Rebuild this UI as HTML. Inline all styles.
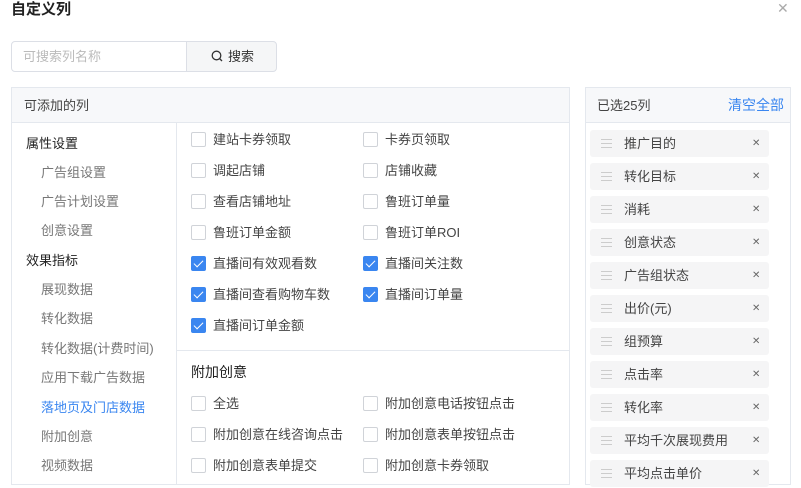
<!DOCTYPE html>
<html><head><meta charset="utf-8"><style>
*{box-sizing:border-box;margin:0;padding:0}
body{width:801px;height:488px;overflow:hidden;background:#fff;font-family:"Liberation Sans","Noto Sans CJK SC",sans-serif;color:#444;font-size:13px;line-height:15px;position:relative}
.a{position:absolute;white-space:nowrap}
.title{left:11px;top:1px;font-size:15px;line-height:17px;font-weight:bold;color:#222}
.close{left:777px;top:1px;font-size:14px;color:#aaa}
.inp{left:11px;top:41px;width:176px;height:31px;border:1px solid #dcdfe6;border-radius:4px 0 0 4px;color:#bbb;padding:7px 11px}
.btn{left:186px;top:41px;width:91px;height:31px;border:1px solid #dcdfe6;border-radius:0 4px 4px 0;background:#f5f6f7;padding:7px 0 0 24px;color:#333}
.panel{border:1px solid #e4e8ee}
.hdr{background:#f7f8fa;border-bottom:1px solid #e4e8ee}
.cb{width:15px;height:15px;border:1px solid #d0d3d8;border-radius:2px;background:#fff}
.on{background:#3a86f0;border-color:#3a86f0}
.on::after{content:"";position:absolute;left:4px;top:1px;width:4px;height:8px;border:solid #fff;border-width:0 1.5px 1.5px 0;transform:rotate(45deg)}
.it{left:590px;width:179px;height:27px;background:#f5f5f6;border-radius:3px}
.it .h{position:absolute;left:11px;top:9px;width:11px;height:9px;border-top:1px solid #ccc;border-bottom:1px solid #ccc}
.it .h::after{content:"";position:absolute;left:0;top:3px;width:11px;border-top:1px solid #ccc}
.it .t{position:absolute;left:34px;top:6px}
.it .x{position:absolute;left:162px;top:6px;font-size:10px;color:#666}
</style></head><body>
<div class="a title">自定义列</div>
<div class="a close">✕</div>
<div class="a inp">可搜索列名称</div>
<div class="a btn"><svg width="12" height="12" viewBox="0 0 12 12" style="vertical-align:-1px;margin-right:5px"><circle cx="5.5" cy="5.5" r="4.3" fill="none" stroke="#333" stroke-width="1.3"/><path d="M8.5 8.5L11 11" stroke="#333" stroke-width="1.3"/></svg>搜索</div>

<div class="a panel" style="left:11px;top:87px;width:559px;height:398px"></div>
<div class="a hdr" style="left:12px;top:88px;width:557px;height:35px;padding:10px 0 0 12px;">可添加的列</div>
<div class="a" style="left:176px;top:123px;height:361px;border-left:1px solid #e4e8ee"></div>
<div class="a" style="left:177px;top:350px;width:392px;border-top:1px solid #e4e8ee"></div>

<div class="a" style="left:26px;top:136px;color:#222">属性设置</div>
<div class="a" style="left:41px;top:165px;color:#777">广告组设置</div>
<div class="a" style="left:41px;top:194px;color:#777">广告计划设置</div>
<div class="a" style="left:41px;top:223px;color:#777">创意设置</div>
<div class="a" style="left:26px;top:253px;color:#222">效果指标</div>
<div class="a" style="left:41px;top:282px;color:#777">展现数据</div>
<div class="a" style="left:41px;top:311px;color:#777">转化数据</div>
<div class="a" style="left:41px;top:341px;color:#777">转化数据(计费时间)</div>
<div class="a" style="left:41px;top:370px;color:#777">应用下载广告数据</div>
<div class="a" style="left:41px;top:400px;color:#3a86f0">落地页及门店数据</div>
<div class="a" style="left:41px;top:429px;color:#777">附加创意</div>
<div class="a" style="left:41px;top:458px;color:#777">视频数据</div>

<div class="a cb" style="left:191px;top:132px"></div><div class="a" style="left:213px;top:132px">建站卡券领取</div>
<div class="a cb" style="left:363px;top:132px"></div><div class="a" style="left:385px;top:132px">卡券页领取</div>
<div class="a cb" style="left:191px;top:163px"></div><div class="a" style="left:213px;top:163px">调起店铺</div>
<div class="a cb" style="left:363px;top:163px"></div><div class="a" style="left:385px;top:163px">店铺收藏</div>
<div class="a cb" style="left:191px;top:194px"></div><div class="a" style="left:213px;top:194px">查看店铺地址</div>
<div class="a cb" style="left:363px;top:194px"></div><div class="a" style="left:385px;top:194px">鲁班订单量</div>
<div class="a cb" style="left:191px;top:225px"></div><div class="a" style="left:213px;top:225px">鲁班订单金额</div>
<div class="a cb" style="left:363px;top:225px"></div><div class="a" style="left:385px;top:225px">鲁班订单ROI</div>
<div class="a cb on" style="left:191px;top:256px"></div><div class="a" style="left:213px;top:256px">直播间有效观看数</div>
<div class="a cb on" style="left:363px;top:256px"></div><div class="a" style="left:385px;top:256px">直播间关注数</div>
<div class="a cb on" style="left:191px;top:287px"></div><div class="a" style="left:213px;top:287px">直播间查看购物车数</div>
<div class="a cb on" style="left:363px;top:287px"></div><div class="a" style="left:385px;top:287px">直播间订单量</div>
<div class="a cb on" style="left:191px;top:318px"></div><div class="a" style="left:213px;top:318px">直播间订单金额</div>

<div class="a" style="left:191px;top:364px;font-size:14px;line-height:16px;color:#222">附加创意</div>
<div class="a cb" style="left:191px;top:396px"></div><div class="a" style="left:213px;top:396px">全选</div>
<div class="a cb" style="left:363px;top:396px"></div><div class="a" style="left:385px;top:396px">附加创意电话按钮点击</div>
<div class="a cb" style="left:191px;top:427px"></div><div class="a" style="left:213px;top:427px">附加创意在线咨询点击</div>
<div class="a cb" style="left:363px;top:427px"></div><div class="a" style="left:385px;top:427px">附加创意表单按钮点击</div>
<div class="a cb" style="left:191px;top:458px"></div><div class="a" style="left:213px;top:458px">附加创意表单提交</div>
<div class="a cb" style="left:363px;top:458px"></div><div class="a" style="left:385px;top:458px">附加创意卡券领取</div>

<div class="a panel" style="left:585px;top:87px;width:206px;height:398px"></div>
<div class="a hdr" style="left:586px;top:88px;width:204px;height:35px;padding:10px 0 0 11px;">已选25列<span style="position:absolute;left:142px;top:9px;color:#3a86f0;font-size:14px;line-height:16px">清空全部</span></div>

<div class="a it" style="top:130px"><i class="h"></i><span class="t">推广目的</span><span class="x">✕</span></div>
<div class="a it" style="top:163px"><i class="h"></i><span class="t">转化目标</span><span class="x">✕</span></div>
<div class="a it" style="top:196px"><i class="h"></i><span class="t">消耗</span><span class="x">✕</span></div>
<div class="a it" style="top:229px"><i class="h"></i><span class="t">创意状态</span><span class="x">✕</span></div>
<div class="a it" style="top:262px"><i class="h"></i><span class="t">广告组状态</span><span class="x">✕</span></div>
<div class="a it" style="top:295px"><i class="h"></i><span class="t">出价(元)</span><span class="x">✕</span></div>
<div class="a it" style="top:328px"><i class="h"></i><span class="t">组预算</span><span class="x">✕</span></div>
<div class="a it" style="top:361px"><i class="h"></i><span class="t">点击率</span><span class="x">✕</span></div>
<div class="a it" style="top:394px"><i class="h"></i><span class="t">转化率</span><span class="x">✕</span></div>
<div class="a it" style="top:427px"><i class="h"></i><span class="t">平均千次展现费用</span><span class="x">✕</span></div>
<div class="a it" style="top:460px"><i class="h"></i><span class="t">平均点击单价</span><span class="x">✕</span></div>
</body></html>
